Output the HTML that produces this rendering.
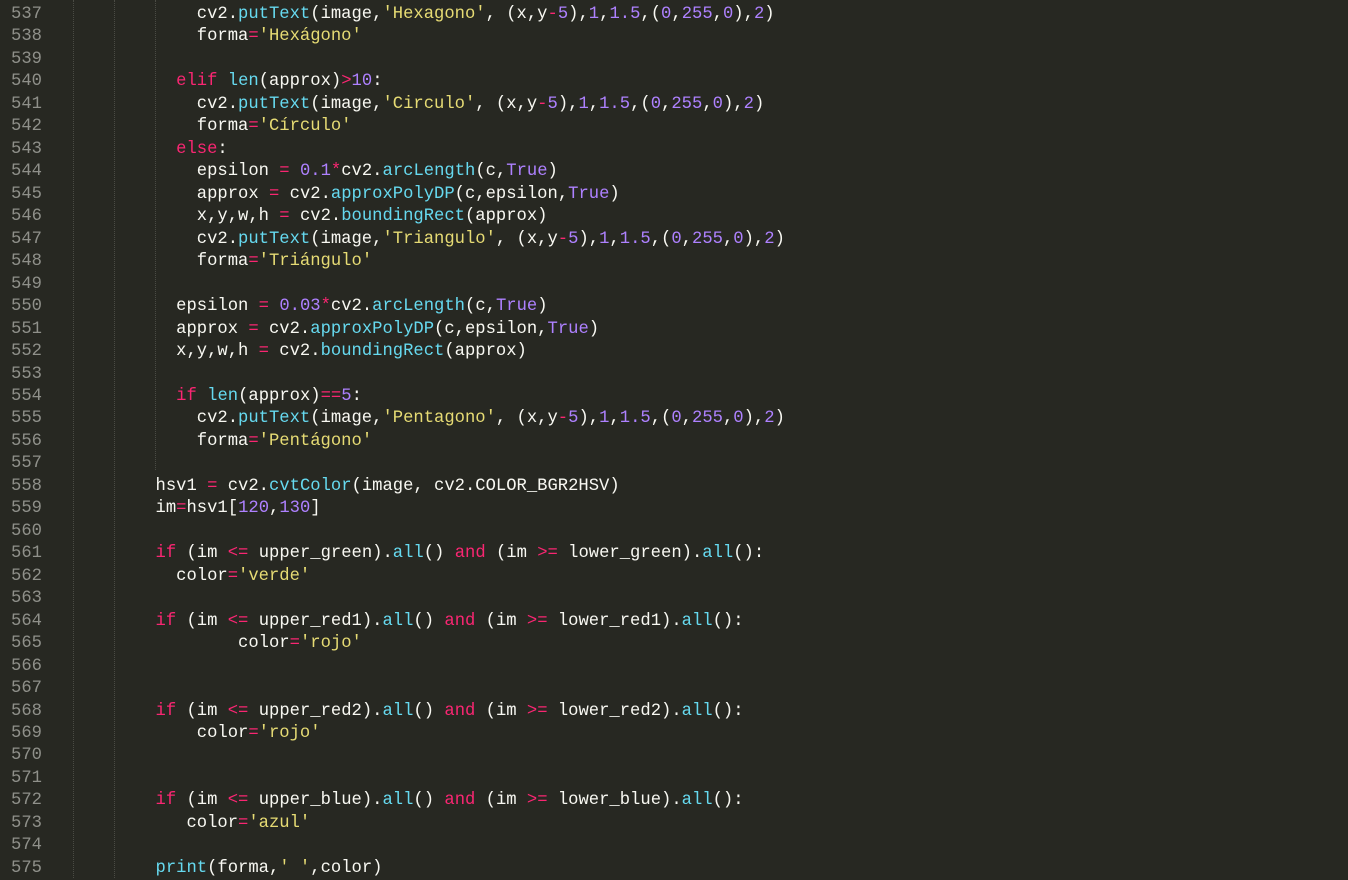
<!DOCTYPE html>
<html><head><meta charset="utf-8"><style>
html,body{margin:0;padding:0;background:#272822;width:1348px;height:878px;overflow:hidden}
#g{position:absolute;left:0;top:4px;width:42px;text-align:right;color:#8f908a;font:17.2px/22.47px "Liberation Mono",monospace}
#c{position:absolute;left:73px;top:4px;color:#f8f8f2;font:17.2px/22.47px "Liberation Mono",monospace;white-space:pre}
.k{color:#f92672}.f{color:#66d9ef}.s{color:#e6db74}.n{color:#ae81ff}
.gd{position:absolute;width:0;border-left:1px dotted #4a4b44}
</style></head><body>
<div class="gd" style="left:73px;top:0;height:878px"></div>
<div class="gd" style="left:114px;top:0;height:878px"></div>
<div class="gd" style="left:155px;top:0;height:470px"></div>
<div id="g">537<br>538<br>539<br>540<br>541<br>542<br>543<br>544<br>545<br>546<br>547<br>548<br>549<br>550<br>551<br>552<br>553<br>554<br>555<br>556<br>557<br>558<br>559<br>560<br>561<br>562<br>563<br>564<br>565<br>566<br>567<br>568<br>569<br>570<br>571<br>572<br>573<br>574<br>575</div>
<div id="c">            cv2.<span class="f">putText</span>(image,<span class="s">'Hexagono'</span>, (x,y<span class="k">-</span><span class="n">5</span>),<span class="n">1</span>,<span class="n">1.5</span>,(<span class="n">0</span>,<span class="n">255</span>,<span class="n">0</span>),<span class="n">2</span>)
            forma<span class="k">=</span><span class="s">'Hexágono'</span>

          <span class="k">elif</span> <span class="f">len</span>(approx)<span class="k">&gt;</span><span class="n">10</span>:
            cv2.<span class="f">putText</span>(image,<span class="s">'Circulo'</span>, (x,y<span class="k">-</span><span class="n">5</span>),<span class="n">1</span>,<span class="n">1.5</span>,(<span class="n">0</span>,<span class="n">255</span>,<span class="n">0</span>),<span class="n">2</span>)
            forma<span class="k">=</span><span class="s">'Círculo'</span>
          <span class="k">else</span>:
            epsilon <span class="k">=</span> <span class="n">0.1</span><span class="k">*</span>cv2.<span class="f">arcLength</span>(c,<span class="n">True</span>)
            approx <span class="k">=</span> cv2.<span class="f">approxPolyDP</span>(c,epsilon,<span class="n">True</span>)
            x,y,w,h <span class="k">=</span> cv2.<span class="f">boundingRect</span>(approx)
            cv2.<span class="f">putText</span>(image,<span class="s">'Triangulo'</span>, (x,y<span class="k">-</span><span class="n">5</span>),<span class="n">1</span>,<span class="n">1.5</span>,(<span class="n">0</span>,<span class="n">255</span>,<span class="n">0</span>),<span class="n">2</span>)
            forma<span class="k">=</span><span class="s">'Triángulo'</span>

          epsilon <span class="k">=</span> <span class="n">0.03</span><span class="k">*</span>cv2.<span class="f">arcLength</span>(c,<span class="n">True</span>)
          approx <span class="k">=</span> cv2.<span class="f">approxPolyDP</span>(c,epsilon,<span class="n">True</span>)
          x,y,w,h <span class="k">=</span> cv2.<span class="f">boundingRect</span>(approx)

          <span class="k">if</span> <span class="f">len</span>(approx)<span class="k">==</span><span class="n">5</span>:
            cv2.<span class="f">putText</span>(image,<span class="s">'Pentagono'</span>, (x,y<span class="k">-</span><span class="n">5</span>),<span class="n">1</span>,<span class="n">1.5</span>,(<span class="n">0</span>,<span class="n">255</span>,<span class="n">0</span>),<span class="n">2</span>)
            forma<span class="k">=</span><span class="s">'Pentágono'</span>

        hsv1 <span class="k">=</span> cv2.<span class="f">cvtColor</span>(image, cv2.COLOR_BGR2HSV)
        im<span class="k">=</span>hsv1[<span class="n">120</span>,<span class="n">130</span>]

        <span class="k">if</span> (im <span class="k">&lt;=</span> upper_green).<span class="f">all</span>() <span class="k">and</span> (im <span class="k">&gt;=</span> lower_green).<span class="f">all</span>():
          color<span class="k">=</span><span class="s">'verde'</span>

        <span class="k">if</span> (im <span class="k">&lt;=</span> upper_red1).<span class="f">all</span>() <span class="k">and</span> (im <span class="k">&gt;=</span> lower_red1).<span class="f">all</span>():
                color<span class="k">=</span><span class="s">'rojo'</span>


        <span class="k">if</span> (im <span class="k">&lt;=</span> upper_red2).<span class="f">all</span>() <span class="k">and</span> (im <span class="k">&gt;=</span> lower_red2).<span class="f">all</span>():
            color<span class="k">=</span><span class="s">'rojo'</span>


        <span class="k">if</span> (im <span class="k">&lt;=</span> upper_blue).<span class="f">all</span>() <span class="k">and</span> (im <span class="k">&gt;=</span> lower_blue).<span class="f">all</span>():
           color<span class="k">=</span><span class="s">'azul'</span>

        <span class="f">print</span>(forma,<span class="s">' '</span>,color)</div>
</body></html>
